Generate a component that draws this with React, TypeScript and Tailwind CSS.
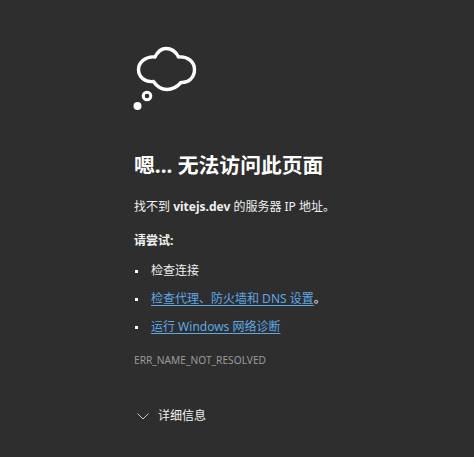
const CloudIcon = () => (
  <svg width="66" height="70" viewBox="0 0 66 70" fill="none" stroke="#ffffff" strokeWidth="3.4" className="overflow-visible">
    <path d="M21 13 C24 7 28 4.5 32 4.5 C37.5 4.5 42 8 44.5 13 C54 12 60.5 18 60.5 25.5 C60.5 33.5 54.5 39 47 38.5 C43 43 38 45.5 33 45.5 C27.5 45.5 22.5 42 19.5 37.5 C11 38.5 4.5 33 4.5 25.5 C4.5 18 12 12 21 13 Z" strokeLinejoin="round" />
    <circle cx="13" cy="52" r="3.8" strokeWidth="3" />
    <circle cx="3.5" cy="62" r="4" fill="#ffffff" stroke="none" />
  </svg>
);

const App = () => {
  return (
    <div
      className="w-[474px] h-[457px] overflow-hidden bg-[#2e2e2e] text-[#f0f0f0] pl-[134px] pt-[44px]"
      style={{ fontFamily: '"Noto Sans", "Noto Sans CJK SC", sans-serif' }}
    >
      <CloudIcon />
      <h1 className="mt-[37px] text-[20.8px] leading-[28px] font-bold text-white">嗯... 无法访问此页面</h1>
      <p className="mt-[19px] text-[12px] leading-[18px]">
        找不到 <span className="font-bold">vitejs.dev</span> 的服务器 IP 地址。
      </p>
      <p className="mt-[16px] text-[12px] leading-[18px] font-bold">请尝试:</p>
      <ul className="mt-[12px] flex flex-col gap-[10px] text-[12px] leading-[18px]">
        <li className="flex items-center">
          <span className="ml-[1px] w-[3px] h-[3px] bg-white" />
          <span className="ml-[13px]">检查连接</span>
        </li>
        <li className="flex items-center">
          <span className="ml-[1px] w-[3px] h-[3px] bg-white" />
          <span className="ml-[13px]">
            <a className="text-[#5fa8e6] underline underline-offset-2">检查代理、防火墙和 DNS 设置</a>。
          </span>
        </li>
        <li className="flex items-center">
          <span className="ml-[1px] w-[3px] h-[3px] bg-white" />
          <span className="ml-[13px]">
            <a className="text-[#5fa8e6] underline underline-offset-2">运行 Windows 网络诊断</a>
          </span>
        </li>
      </ul>
      <p className="mt-[16px] text-[10.2px] leading-[16px] text-[#9a9a9a]">ERR_NAME_NOT_RESOLVED</p>
      <div className="mt-[39px] flex items-center">
        <svg width="12" height="7" viewBox="0 0 12 7" fill="none" stroke="#c8c8c8" strokeWidth="1" className="ml-[3px]">
          <path d="M0.5 0.5 L6 6 L11.5 0.5" />
        </svg>
        <span className="ml-[9px] text-[12px] leading-[18px]">详细信息</span>
      </div>
    </div>
  );
};

export default App;
